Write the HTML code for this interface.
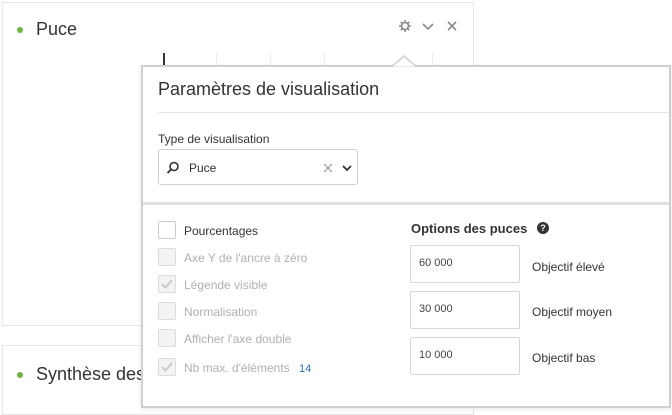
<!DOCTYPE html>
<html><head><meta charset="utf-8"><style>
*{box-sizing:border-box;margin:0;padding:0}
body{width:672px;height:411px;background:#fff;position:relative;overflow:hidden;font-family:"Liberation Sans",sans-serif;color:#2c2c2c}
.abs{position:absolute}
.card{position:absolute;border:1px solid #e6e6e6;background:#fff}
.dot{position:absolute;width:6px;height:6px;border-radius:50%;background:#6cb33f}
.cb{position:absolute;left:158px;width:18px;height:18px;border:1px solid #dcdcdc;border-radius:2px;background:#f3f3f3}
.lbl{position:absolute;left:184px;font-size:12px;color:#b0b0b0}
.inp{position:absolute;left:410px;width:110px;height:38px;border:1px solid #d6d6d6;border-radius:2px;font-size:11px;color:#444;padding:11px 0 0 8px}
.ol{position:absolute;left:532px;font-size:12px;color:#333}
</style></head><body>
<div class="card" style="left:2px;top:2px;width:472px;height:324px"></div>
<div class="dot" style="left:17px;top:27px"></div>
<div class="abs" style="left:36px;top:19px;font-size:18px;color:#333">Puce</div>
<svg class="abs" style="left:398px;top:18px" width="64" height="16" viewBox="0 0 64 16">
<g fill="none" stroke="#8a8a8a" stroke-width="1.6"><circle cx="7" cy="8" r="3.5"/><path d="M7 2v2M7 12v2M1 8h2M11 8h2M2.8 3.8l1.4 1.4M9.8 10.8l1.4 1.4M2.8 12.2l1.4-1.4M9.8 5.2l1.4-1.4"/>
<path d="M25 6l5 5 5-5"/><path d="M50 4l8 8M58 4l-8 8"/></g></svg>
<div class="abs" style="left:163px;top:53px;width:2px;height:12px;background:#333"></div>
<div class="abs" style="left:216px;top:53px;width:1px;height:12px;background:#eee"></div>
<div class="abs" style="left:270px;top:53px;width:1px;height:12px;background:#eee"></div>
<div class="abs" style="left:324px;top:53px;width:1px;height:12px;background:#eee"></div>
<div class="abs" style="left:432px;top:53px;width:1px;height:12px;background:#eee"></div>
<div class="card" style="left:2px;top:345px;width:472px;height:70px"></div>
<div class="dot" style="left:17px;top:372px"></div>
<div class="abs" style="left:36px;top:364px;font-size:18px;color:#333">Synthèse des</div>
<div class="abs" style="left:141px;top:65px;width:530px;height:343px;border:2px solid #d0d0d0;background:#fff;box-shadow:0 1px 4px rgba(0,0,0,.1)"></div>
<svg class="abs" style="left:392px;top:55px" width="24" height="12"><path d="M0 11.5L12 1l12 10.5" fill="#fff" stroke="#d0d0d0" stroke-width="1.5"/></svg>
<div class="abs" style="left:158px;top:79px;font-size:18px;color:#333">Paramètres de visualisation</div>
<div class="abs" style="left:158px;top:112px;width:511px;height:1px;background:#e6e6e6"></div>
<div class="abs" style="left:158px;top:132px;font-size:12px;color:#333">Type de visualisation</div>
<div class="abs" style="left:158px;top:149px;width:200px;height:36px;border:1px solid #d0d0d0;border-radius:3px"></div>
<svg class="abs" style="left:166px;top:161px" width="14" height="14"><circle cx="8" cy="5.5" r="4" fill="none" stroke="#333" stroke-width="1.6"/><path d="M5 8.5L1.5 12" stroke="#333" stroke-width="1.8"/></svg>
<div class="abs" style="left:189px;top:161px;font-size:12px;color:#333">Puce</div>
<svg class="abs" style="left:322px;top:162px" width="32" height="12"><path d="M2 2l8 8M10 2l-8 8" stroke="#999" stroke-width="1.2"/><path d="M21 4l4 4 4-4" stroke="#333" stroke-width="1.8" fill="none"/></svg>
<div class="abs" style="left:143px;top:202px;width:526px;height:3px;background:#e0e0e0"></div>
<div class="cb" style="top:221px;background:#fff;border-color:#ccc"></div><div class="lbl" style="top:224px;color:#333">Pourcentages</div>
<div class="cb" style="top:248px"></div><div class="lbl" style="top:251px">Axe Y de l'ancre à zéro</div>
<div class="cb" style="top:275px"></div><div class="lbl" style="top:278px">Légende visible</div>
<div class="cb" style="top:302px"></div><div class="lbl" style="top:305px">Normalisation</div>
<div class="cb" style="top:329px"></div><div class="lbl" style="top:332px">Afficher l'axe double</div>
<div class="cb" style="top:358px"></div><div class="lbl" style="top:361px">Nb max. d'éléments <span style="color:#2d6cb5;font-size:11px;margin-left:6px">14</span></div>
<svg class="abs" style="left:160px;top:277px" width="14" height="14"><path d="M2 7l3.5 3.5L12 3" stroke="#c8c8c8" stroke-width="1.8" fill="none"/></svg>
<svg class="abs" style="left:160px;top:360px" width="14" height="14"><path d="M2 7l3.5 3.5L12 3" stroke="#c8c8c8" stroke-width="1.8" fill="none"/></svg>
<div class="abs" style="left:411px;top:221px;font-size:13px;font-weight:bold;color:#333">Options des puces</div>
<div class="abs" style="left:537px;top:222px;width:12px;height:12px;border-radius:50%;background:#333;color:#fff;font-size:9px;font-weight:bold;text-align:center;line-height:12px">?</div>
<div class="inp" style="top:245px">60 000</div><div class="ol" style="top:260px">Objectif élevé</div>
<div class="inp" style="top:291px">30 000</div><div class="ol" style="top:305px">Objectif moyen</div>
<div class="inp" style="top:337px">10 000</div><div class="ol" style="top:351px">Objectif bas</div>
</body></html>
